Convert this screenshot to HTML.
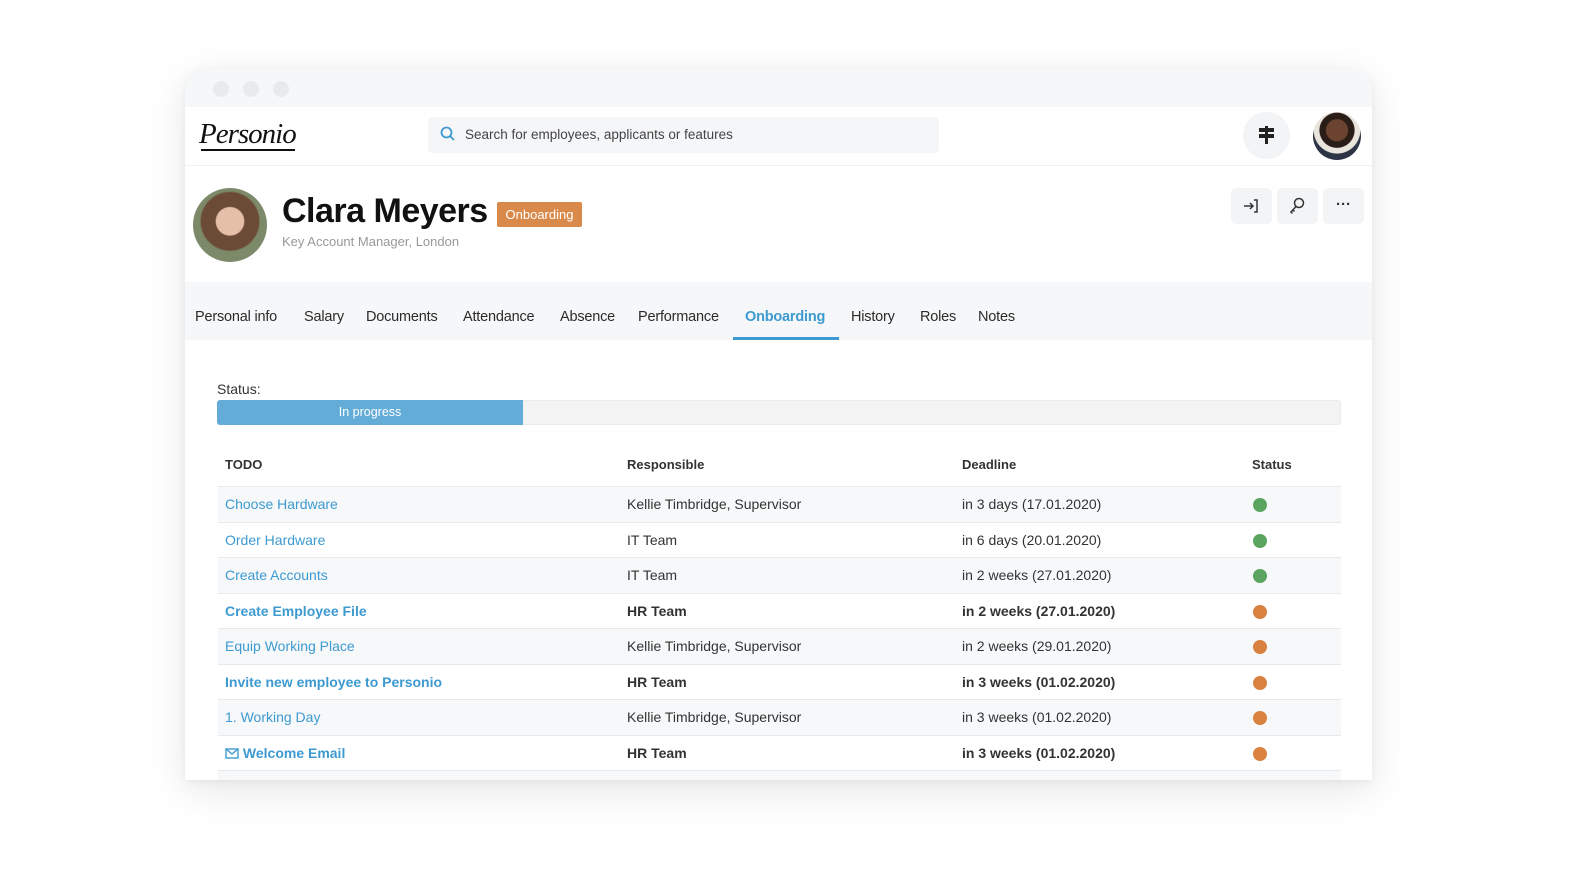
<!DOCTYPE html>
<html><head><meta charset="utf-8"><style>
*{margin:0;padding:0;box-sizing:border-box}
body{width:1586px;height:888px;background:#fff;font-family:"Liberation Sans",sans-serif;position:relative;overflow:hidden;color:#333}
.win{position:absolute;left:185px;top:68px;width:1187px;height:712px;background:#fff;border-radius:22px 22px 0 0;box-shadow:0 10px 40px rgba(0,0,0,.10),0 2px 8px rgba(0,0,0,.05);overflow:hidden}
.tb{position:absolute;left:0;top:0;width:100%;height:39px;background:#f6f7f8}
.dot{position:absolute;top:13px;width:16px;height:16px;border-radius:50%;background:#e9eaec}
.a{position:absolute;white-space:nowrap}
.hdr{position:absolute;top:39px;left:0;width:100%;height:59px;border-bottom:1px solid #f0f1f3}
.search{position:absolute;left:243px;top:10px;width:511px;height:36px;background:#f5f6f8;border-radius:4px}
.tabs{position:absolute;left:0;top:214px;width:100%;height:58px;background:#f6f7f9}
.tab{position:absolute;top:27px;font-size:14.5px;color:#2b2b2b;letter-spacing:-.2px}
.ib{position:absolute;top:120px;width:41px;height:36px;background:#f3f4f6;border-radius:5px}
.row{position:absolute;left:33px;width:1123px;height:35.5px;border-top:1px solid #e8e9eb;font-size:14px}
.row.g{background:#f6f8fa}
.row span{position:absolute;top:9px;white-space:nowrap}
.l{left:7px;color:#3d9ad1}
.r{left:409px;color:#333}
.d{left:744px;color:#333}
.s{left:1035px;top:11px!important;width:14px;height:14px;border-radius:50%}
.b span{font-weight:bold}
</style></head><body>
<div class="win">
 <div class="tb"><div class="dot" style="left:28px"></div><div class="dot" style="left:58px"></div><div class="dot" style="left:88px"></div></div>
 <div class="hdr">
  <svg class="a" style="left:12px;top:10px" width="102" height="38" viewBox="0 0 102 38"><text x="2" y="26" font-family="Liberation Serif,serif" font-style="italic" font-size="29" fill="#111" letter-spacing="-1">Personio</text><line x1="4" y1="33" x2="98" y2="33" stroke="#111" stroke-width="2"/></svg>
  <div class="search"><svg class="a" style="left:12px;top:9px" width="16" height="16" viewBox="0 0 16 16"><circle cx="6.5" cy="6.5" r="5" fill="none" stroke="#3d9ad1" stroke-width="1.8"/><line x1="10.2" y1="10.2" x2="14" y2="14" stroke="#3d9ad1" stroke-width="1.8"/></svg><div class="a" style="left:37px;top:10px;font-size:13.5px;color:#444">Search for employees, applicants or features</div></div>
  <div class="a" style="left:1058px;top:5px;width:47px;height:47px;border-radius:50%;background:#f3f4f6"><svg class="a" style="left:15px;top:14px" width="17" height="18" viewBox="0 0 17 18"><rect x="1" y="2" width="15" height="4" fill="#222"/><rect x="1" y="8" width="15" height="4" fill="#222"/><rect x="7" y="0" width="3" height="18" fill="#222"/></svg></div>
  <div class="a" style="left:1128px;top:5px;width:48px;height:48px;border-radius:50%;background:radial-gradient(circle at 50% 38%,#6b4330 0 28%,#2a1d18 30% 45%,#e9e4dc 47% 60%,#2c3446 62%)"></div>
 </div>
 <div class="a" style="left:8px;top:120px;width:74px;height:74px;border-radius:50%;background:radial-gradient(circle at 50% 45%,#e6bfa8 0 25%,#6b4a36 27% 52%,#7d8a6a 55%)"></div>
 <div class="a" style="left:97px;top:124px;font-size:34px;font-weight:bold;color:#111;letter-spacing:-.5px">Clara Meyers</div>
 <div class="a" style="left:312px;top:134px;width:85px;height:25px;background:#d98a4a;border-radius:2px;color:#fff;font-size:13px;text-align:center;line-height:25px">Onboarding</div>
 <div class="a" style="left:97px;top:166px;font-size:13px;color:#999">Key Account Manager, London</div>
 <div class="ib" style="left:1046px"><svg class="a" style="left:12px;top:10px" width="17" height="16" viewBox="0 0 17 16"><path d="M1 8h9M7 5l3 3-3 3M11 2h3v12h-3" fill="none" stroke="#333" stroke-width="1.5"/></svg></div>
 <div class="ib" style="left:1092px"><svg class="a" style="left:12px;top:9px" width="17" height="18" viewBox="0 0 17 18"><circle cx="10" cy="6" r="4.5" fill="none" stroke="#333" stroke-width="1.5"/><path d="M7 9.5L2 15l1.5 1.5M4 13l1.5 1.5" fill="none" stroke="#333" stroke-width="1.5"/></svg></div>
 <div class="ib" style="left:1138px"><div class="a" style="left:13px;top:8px;font-size:15px;font-weight:bold;color:#333">···</div></div>
 <div class="tabs">
  <div class="tab" style="left:10px">Personal info</div>
  <div class="tab" style="left:119px">Salary</div>
  <div class="tab" style="left:181px">Documents</div>
  <div class="tab" style="left:278px">Attendance</div>
  <div class="tab" style="left:375px">Absence</div>
  <div class="tab" style="left:453px">Performance</div>
  <div class="tab" style="left:560px;color:#3d9ad1;font-weight:bold">Onboarding</div>
  <div class="a" style="left:548px;top:55px;width:106px;height:3px;background:#3d9ad1"></div>
  <div class="tab" style="left:666px">History</div>
  <div class="tab" style="left:735px">Roles</div>
  <div class="tab" style="left:793px">Notes</div>
 </div>
 <div class="a" style="left:32px;top:313px;font-size:14px;color:#333">Status:</div>
 <div class="a" style="left:32px;top:332px;width:1124px;height:25px;background:#f3f3f3;border:1px solid #ebebeb;border-radius:3px"></div>
 <div class="a" style="left:32px;top:332px;width:306px;height:25px;background:#63acd7;border-radius:3px 0 0 3px;color:#fff;font-size:12.5px;text-align:center;line-height:25px">In progress</div>
 <div class="a" style="left:40px;top:389px;font-size:13px;font-weight:bold;color:#333">TODO</div>
 <div class="a" style="left:442px;top:389px;font-size:13px;font-weight:bold;color:#333">Responsible</div>
 <div class="a" style="left:777px;top:389px;font-size:13px;font-weight:bold;color:#333">Deadline</div>
 <div class="a" style="left:1067px;top:389px;font-size:13px;font-weight:bold;color:#333">Status</div>
 <div class="row g" style="top:418px"><span class="l">Choose Hardware</span><span class="r">Kellie Timbridge, Supervisor</span><span class="d">in 3 days (17.01.2020)</span><span class="s" style="background:#5aa460"></span></div>
 <div class="row" style="top:453.5px"><span class="l">Order Hardware</span><span class="r">IT Team</span><span class="d">in 6 days (20.01.2020)</span><span class="s" style="background:#5aa460"></span></div>
 <div class="row g" style="top:489px"><span class="l">Create Accounts</span><span class="r">IT Team</span><span class="d">in 2 weeks (27.01.2020)</span><span class="s" style="background:#5aa460"></span></div>
 <div class="row b" style="top:524.5px"><span class="l">Create Employee File</span><span class="r">HR Team</span><span class="d">in 2 weeks (27.01.2020)</span><span class="s" style="background:#d9823f"></span></div>
 <div class="row g" style="top:560px"><span class="l">Equip Working Place</span><span class="r">Kellie Timbridge, Supervisor</span><span class="d">in 2 weeks (29.01.2020)</span><span class="s" style="background:#d9823f"></span></div>
 <div class="row b" style="top:595.5px"><span class="l">Invite new employee to Personio</span><span class="r">HR Team</span><span class="d">in 3 weeks (01.02.2020)</span><span class="s" style="background:#d9823f"></span></div>
 <div class="row g" style="top:631px"><span class="l">1. Working Day</span><span class="r">Kellie Timbridge, Supervisor</span><span class="d">in 3 weeks (01.02.2020)</span><span class="s" style="background:#d9823f"></span></div>
 <div class="row b" style="top:666.5px"><span class="l"><svg width="14" height="11" viewBox="0 0 14 11" style="vertical-align:-1px"><rect x="1" y="1" width="12" height="9" fill="none" stroke="#3d9ad1" stroke-width="1.4"/><path d="M1 1l6 5 6-5" fill="none" stroke="#3d9ad1" stroke-width="1.4"/></svg> Welcome Email</span><span class="r">HR Team</span><span class="d">in 3 weeks (01.02.2020)</span><span class="s" style="background:#d9823f"></span></div>
 <div class="row g" style="top:702px"></div>
</div>
</body></html>
